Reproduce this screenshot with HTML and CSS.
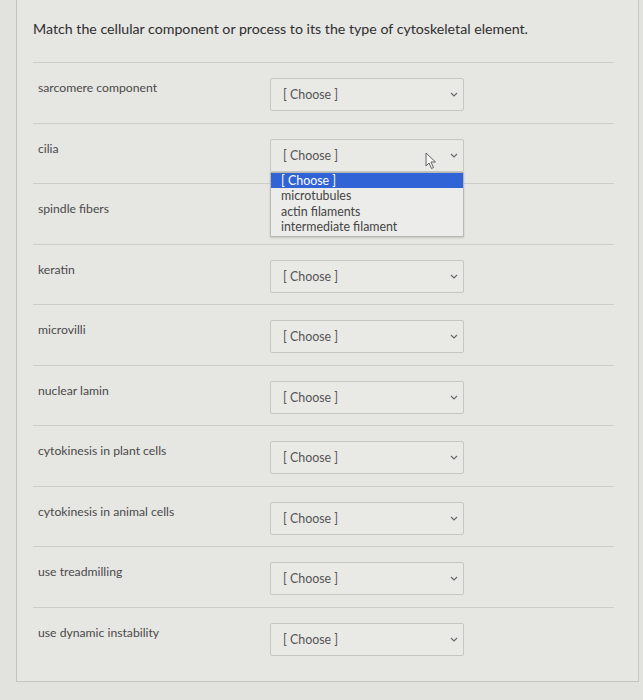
FILE: index.html
```html
<!DOCTYPE html>
<html>
<head>
<meta charset="utf-8">
<link rel="stylesheet" href="styles.css">
</head>
<body>
<div class="card">
  <p class="title">Match the cellular component or process to its the type of cytoskeletal element.</p>
  <div class="rows">
    <div class="row"><span class="label">sarcomere component</span><div class="select"><span>[ Choose ]</span><svg class="chev" viewBox="0 0 8 5" width="8" height="5"><path d="M1 1 L4 4 L7 1" fill="none" stroke="#666" stroke-width="1.1"/></svg></div></div>
    <div class="row"><span class="label">cilia</span><div class="select open"><span>[ Choose ]</span><svg class="cursor" viewBox="0 0 12 18" width="12" height="18"><path d="M1 1 L1 14 L4 11 L6.5 16.5 L8.5 15.5 L6 10 L10.5 10 Z" fill="#f4f4f2" stroke="#555" stroke-width="0.9"/></svg><svg class="chev" viewBox="0 0 8 5" width="8" height="5"><path d="M1 1 L4 4 L7 1" fill="none" stroke="#666" stroke-width="1.1"/></svg>
      <ul class="menu">
        <li class="sel">[ Choose ]</li>
        <li>microtubules</li>
        <li>actin filaments</li>
        <li>intermediate filament</li>
      </ul></div></div>
    <div class="row"><span class="label">spindle fibers</span></div>
    <div class="row"><span class="label">keratin</span><div class="select"><span>[ Choose ]</span><svg class="chev" viewBox="0 0 8 5" width="8" height="5"><path d="M1 1 L4 4 L7 1" fill="none" stroke="#666" stroke-width="1.1"/></svg></div></div>
    <div class="row"><span class="label">microvilli</span><div class="select"><span>[ Choose ]</span><svg class="chev" viewBox="0 0 8 5" width="8" height="5"><path d="M1 1 L4 4 L7 1" fill="none" stroke="#666" stroke-width="1.1"/></svg></div></div>
    <div class="row"><span class="label">nuclear lamin</span><div class="select"><span>[ Choose ]</span><svg class="chev" viewBox="0 0 8 5" width="8" height="5"><path d="M1 1 L4 4 L7 1" fill="none" stroke="#666" stroke-width="1.1"/></svg></div></div>
    <div class="row"><span class="label">cytokinesis in plant cells</span><div class="select"><span>[ Choose ]</span><svg class="chev" viewBox="0 0 8 5" width="8" height="5"><path d="M1 1 L4 4 L7 1" fill="none" stroke="#666" stroke-width="1.1"/></svg></div></div>
    <div class="row"><span class="label">cytokinesis in animal cells</span><div class="select"><span>[ Choose ]</span><svg class="chev" viewBox="0 0 8 5" width="8" height="5"><path d="M1 1 L4 4 L7 1" fill="none" stroke="#666" stroke-width="1.1"/></svg></div></div>
    <div class="row"><span class="label">use treadmilling</span><div class="select"><span>[ Choose ]</span><svg class="chev" viewBox="0 0 8 5" width="8" height="5"><path d="M1 1 L4 4 L7 1" fill="none" stroke="#666" stroke-width="1.1"/></svg></div></div>
    <div class="row"><span class="label">use dynamic instability</span><div class="select"><span>[ Choose ]</span><svg class="chev" viewBox="0 0 8 5" width="8" height="5"><path d="M1 1 L4 4 L7 1" fill="none" stroke="#666" stroke-width="1.1"/></svg></div></div>
  </div>
</div>
</body>
</html>
```
FILE: styles.css
```css
html, body {
  margin: 0;
  padding: 0;
  background: #e2e2df;
  font-family: Lato, "Liberation Sans", sans-serif;
  color: #444;
}
body {
  height: 700px;
  overflow: hidden;
}
.card {
  margin: -10px 4px 0 16px;
  height: 692px;
  box-sizing: border-box;
  border: 1px solid #c4c4c1;
  background: #e6e6e3;
  padding: 0 24px 0 16px;
}
.title {
  margin: 0;
  padding: 28px 0 0 0;
  height: 43px;
  font-size: 14.2px;
  color: #2e2e2e;
  line-height: 20px;
}
.rows {
  display: flex;
  flex-direction: column;
}
.row {
  height: 59.5px;
  border-top: 1px solid #cdcdca;
  display: flex;
  align-items: flex-start;
  position: relative;
}
.label {
  width: 232px;
  padding: 17px 0 0 5px;
  font-size: 12.2px;
  color: #4a4a4a;
  line-height: 16px;
}
.select {
  margin-top: 15px;
  width: 194px;
  height: 33px;
  box-sizing: border-box;
  border: 1px solid #c6c6c3;
  border-radius: 2px;
  background: #e9e9e6;
  display: flex;
  align-items: center;
  padding: 0 5px 0 12px;
  font-size: 12.4px;
  color: #555;
  position: relative;
}
.select span {
  flex: 1;
}
.chev {
  display: block;
}
.cursor {
  position: absolute;
  left: 154px;
  top: 12px;
}
.menu {
  position: absolute;
  left: -1px;
  top: 32px;
  width: 194px;
  margin: 0;
  padding: 0 0 1px 0;
  list-style: none;
  background: #ececea;
  border: 1px solid #b8b8b5;
  box-sizing: border-box;
  z-index: 2;
  box-shadow: 0 1px 2px rgba(0,0,0,0.15);
}
.menu li {
  height: 15.5px;
  line-height: 15.5px;
  padding-left: 10px;
  font-size: 12.4px;
  color: #444;
}
.menu li.sel {
  background: #2f63d6;
  color: #fff;
}
```
